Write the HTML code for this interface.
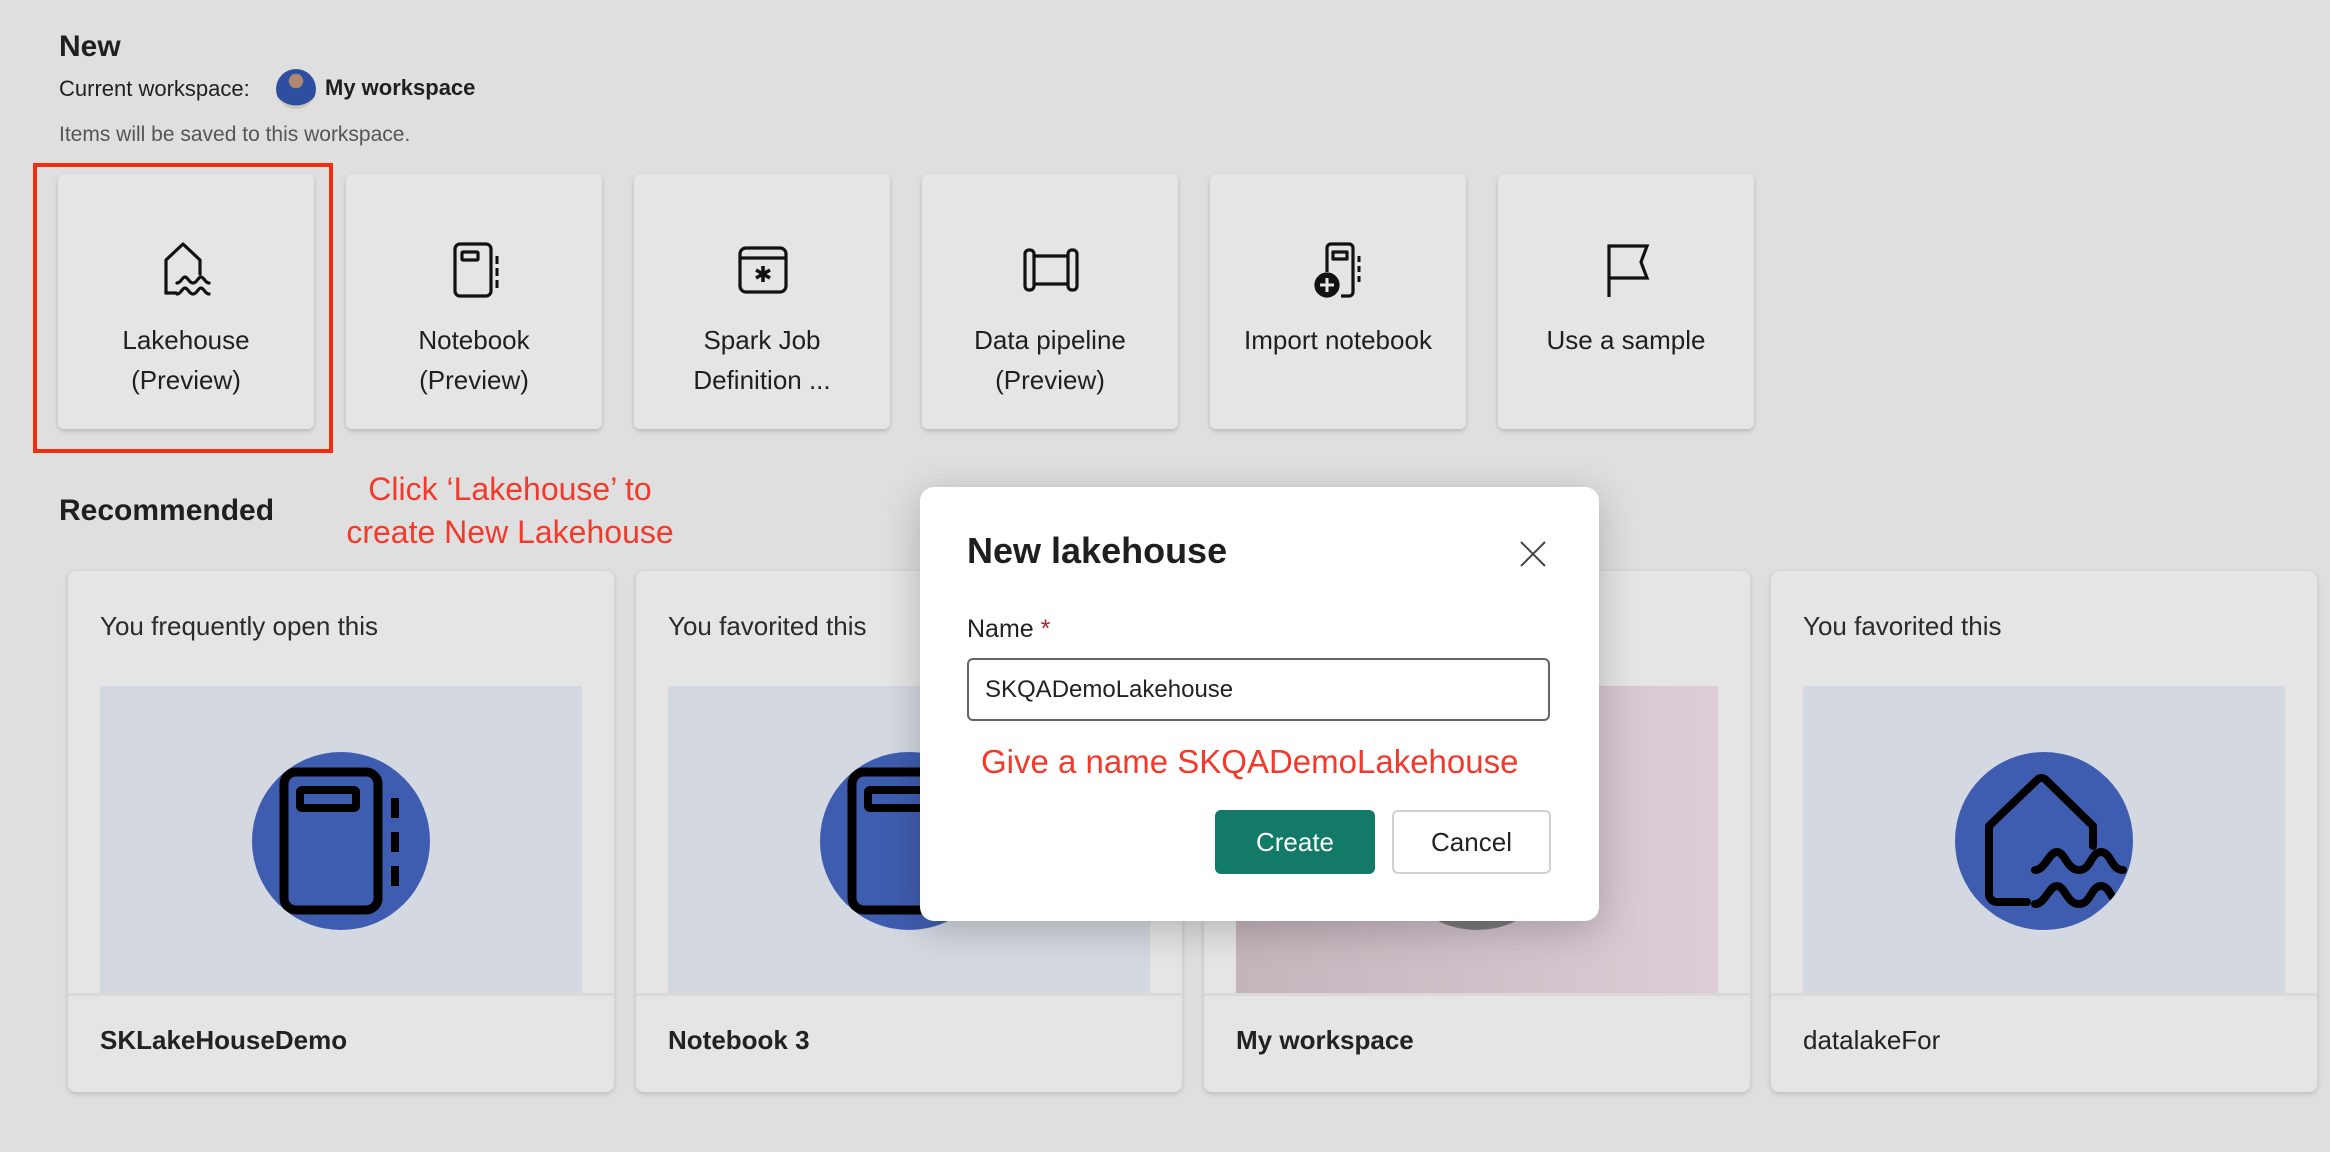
<!DOCTYPE html>
<html><head><meta charset="utf-8"><style>
*{margin:0;padding:0;box-sizing:border-box}
body{width:2330px;height:1152px;background:#dfdfdf;font-family:"Liberation Sans",sans-serif;color:#1f1f1f;position:relative;overflow:hidden}
.a{position:absolute}
.card{position:absolute;top:174px;width:256px;height:255px;background:#e5e5e5;border-radius:6px;box-shadow:0 2px 5px rgba(0,0,0,.18)}
.card svg{position:absolute;left:101px;top:68px}
.card .l{position:absolute;left:0;right:0;top:146px;text-align:center;font-size:26px;line-height:40px;color:#1f1f1f}
.rc{position:absolute;top:571px;width:546px;height:521px;background:#e5e5e5;border-radius:8px;box-shadow:0 2px 6px rgba(0,0,0,.16);overflow:hidden}
.rc .h{position:absolute;left:32px;top:40px;font-size:26px;color:#2a2a2a}
.rc .img{position:absolute;left:32px;top:115px;width:482px;height:308px;background:#d4d8e0}
.rc .div{position:absolute;left:0;right:0;top:422px;height:3px;background:#d9d9d9}
.rc .f{position:absolute;left:32px;top:454px;font-size:26px;font-weight:bold;color:#222}
.circ{position:absolute;left:152px;top:66px;width:178px;height:178px;border-radius:50%;background:#3f5db0;overflow:hidden}
</style></head><body>
<div class="a" style="left:59px;top:30px;font-size:30px;font-weight:bold">New</div>
<div class="a" style="left:59px;top:76px;font-size:22px">Current workspace:</div>
<div class="a" style="left:276px;top:69px;width:40px;height:40px;border-radius:50%;background:radial-gradient(circle at 50% 30%,#b08a70 0 20%,#2e4fa0 22% 70%,#c8c8c0 72%)"></div>
<div class="a" style="left:325px;top:75px;font-size:22px;font-weight:bold">My workspace</div>
<div class="a" style="left:59px;top:123px;font-size:21px;color:#555">Items will be saved to this workspace.</div>

<div class="a" style="left:33px;top:163px;width:300px;height:290px;border:4px solid #f22e12"></div>

<div class="card" style="left:58px"><svg width="56" height="56" viewBox="0 0 56 56" fill="none" stroke="#111" stroke-width="3.2" stroke-linejoin="round" stroke-linecap="round"><path d="M7 51V18L24 2L41 18V32"/><path d="M7 51H17"/><path d="M18 41c4 0 5-6 8-6s4 6 8 6 5-6 8-6 4 6 8 6"/><path d="M18 52c4 0 5-6 8-6s4 6 8 6 5-6 8-6 4 6 8 6"/></svg><div class="l">Lakehouse<br>(Preview)</div></div>
<div class="card" style="left:346px"><svg width="56" height="56" viewBox="0 0 56 56" fill="none" stroke="#111" stroke-width="3.2" stroke-linejoin="round"><rect x="8" y="2" width="36" height="52" rx="5"/><rect x="15" y="10" width="16" height="8" rx="1"/><path d="M50 14v8M50 26v8M50 38v8" stroke-width="3"/></svg><div class="l">Notebook<br>(Preview)</div></div>
<div class="card" style="left:634px"><svg width="56" height="56" viewBox="0 0 56 56" fill="none" stroke="#111" stroke-width="3.2" stroke-linejoin="round"><rect x="5" y="6" width="46" height="44" rx="6"/><path d="M5 16H51"/><path d="M28 24v16M21 28l14 8M35 28l-14 8" stroke-width="3.5"/></svg><div class="l">Spark Job<br>Definition ...</div></div>
<div class="card" style="left:922px"><svg width="56" height="56" viewBox="0 0 56 56" fill="none" stroke="#111" stroke-width="3.2"><rect x="2" y="8" width="9" height="40" rx="4"/><rect x="45" y="8" width="9" height="40" rx="4"/><path d="M11 14H45M11 42H45"/></svg><div class="l">Data pipeline<br>(Preview)</div></div>
<div class="card" style="left:1210px"><svg width="56" height="56" viewBox="0 0 56 56" fill="none" stroke="#111" stroke-width="3.2" stroke-linejoin="round"><path d="M16 30V6a4 4 0 0 1 4-4h18a4 4 0 0 1 4 4v44a4 4 0 0 1-4 4H30"/><rect x="22" y="10" width="14" height="7"/><path d="M48 14v6M48 24v6M48 34v6" stroke-width="3"/><circle cx="16" cy="43" r="11" fill="#111"/><path d="M16 36v14M9 43h14" stroke="#e5e5e5" stroke-width="3"/></svg><div class="l">Import notebook</div></div>
<div class="card" style="left:1498px"><svg width="56" height="56" viewBox="0 0 56 56" fill="none" stroke="#111" stroke-width="3.2" stroke-linejoin="miter"><path d="M10 55V4H48L42 20L48 36H10"/></svg><div class="l">Use a sample</div></div>

<div class="a" style="left:59px;top:494px;font-size:30px;font-weight:bold">Recommended</div>
<div class="a" style="left:300px;top:468px;width:420px;text-align:center;font-size:32px;line-height:43px;color:#f23a2c">Click ‘Lakehouse’ to<br>create New Lakehouse</div>

<div class="rc" style="left:68px"><div class="h">You frequently open this</div><div class="img"><div class="circ"><svg width="178" height="178" viewBox="0 0 178 178" fill="none" stroke="#000" stroke-width="9"><rect x="32" y="20" width="94" height="138" rx="12"/><rect x="48" y="38" width="56" height="18" rx="2" stroke-width="8"/><path d="M143 46v20M143 80v20M143 114v20" stroke-width="8"/></svg></div></div><div class="div"></div><div class="f">SKLakeHouseDemo</div></div>
<div class="rc" style="left:636px"><div class="h">You favorited this</div><div class="img"><div class="circ"><svg width="178" height="178" viewBox="0 0 178 178" fill="none" stroke="#000" stroke-width="9"><rect x="32" y="20" width="94" height="138" rx="12"/><rect x="48" y="38" width="56" height="18" rx="2" stroke-width="8"/><path d="M143 46v20M143 80v20M143 114v20" stroke-width="8"/></svg></div></div><div class="div"></div><div class="f">Notebook 3</div></div>
<div class="rc" style="left:1204px"><div class="h">You favorited this</div><div class="img" style="background:linear-gradient(90deg,#c4b4bc,#dccdd6)"><div class="circ" style="background:#7a7a7a"></div></div><div class="div"></div><div class="f">My workspace</div></div>
<div class="rc" style="left:1771px"><div class="h">You favorited this</div><div class="img"><div class="circ"><svg width="178" height="178" viewBox="0 0 178 178" fill="none" stroke="#000" stroke-width="8" stroke-linecap="round" stroke-linejoin="round"><path d="M72 150H42a8 8 0 0 1-8-8V74L82 28a6 6 0 0 1 9 0L138 74V94"/><path d="M80 118c10 0 14-18 22-18s10 18 22 18 12-18 22-18 10 18 22 18"/><path d="M80 152c10 0 14-18 22-18s10 18 22 18 12-18 22-18 10 18 22 18"/></svg></div></div><div class="div"></div><div class="f" style="font-weight:normal">datalakeFor</div></div>

<div class="a" style="left:920px;top:487px;width:679px;height:434px;background:#fff;border-radius:14px;box-shadow:0 8px 40px rgba(0,0,0,.22)">
<div class="a" style="left:47px;top:43px;font-size:36px;font-weight:bold;color:#1f1f1f">New lakehouse</div>
<svg class="a" style="left:598px;top:52px" width="30" height="30" viewBox="0 0 30 30" stroke="#444" stroke-width="2"><path d="M3 3L27 27M27 3L3 27"/></svg>
<div class="a" style="left:47px;top:128px;font-size:25px;color:#222">Name <span style="color:#a4262c">*</span></div>
<div class="a" style="left:47px;top:171px;width:583px;height:63px;border:2px solid #666;border-radius:6px;font-size:24px;line-height:59px;padding-left:16px;color:#222">SKQADemoLakehouse</div>
<div class="a" style="left:61px;top:256px;font-size:33px;color:#f23a2c">Give a name SKQADemoLakehouse</div>
<div class="a" style="left:295px;top:323px;width:160px;height:64px;background:#127a66;border-radius:6px;color:#fff;font-size:26px;line-height:64px;text-align:center">Create</div>
<div class="a" style="left:472px;top:323px;width:159px;height:64px;border:2px solid #d1d1d1;border-radius:6px;color:#222;font-size:26px;line-height:60px;text-align:center">Cancel</div>
</div>
</body></html>
